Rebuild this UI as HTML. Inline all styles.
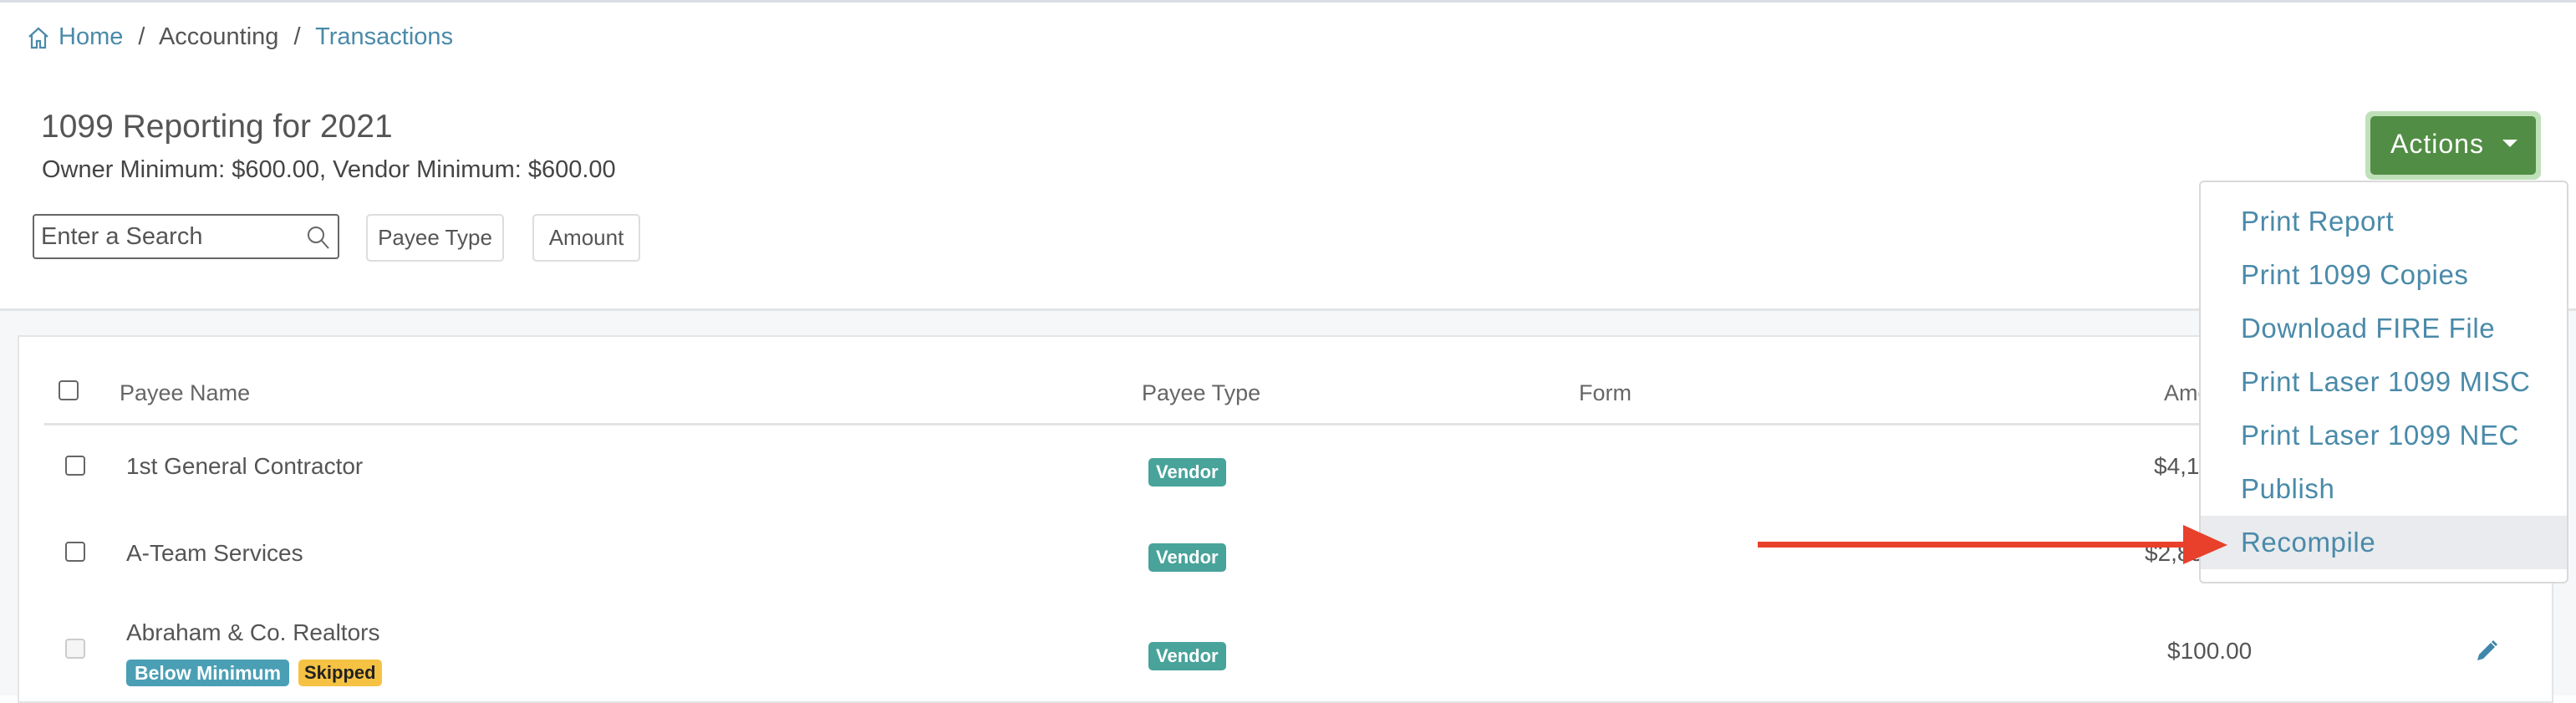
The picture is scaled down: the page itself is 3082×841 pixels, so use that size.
<!DOCTYPE html>
<html><head><meta charset="utf-8">
<style>
*{box-sizing:border-box;margin:0;padding:0}
body{width:3082px;height:832px;overflow:hidden;background:#fff;font-family:"Liberation Sans",sans-serif;color:#555;position:relative}
.a{position:absolute;white-space:nowrap}
.link{color:#4a8aa9}
.cb{position:absolute;width:24px;height:24px;border:2.5px solid #666;border-radius:4px;background:#fff}
.badge{position:absolute;height:34px;border-radius:5px;color:#fff;font-weight:bold;font-size:22px;line-height:34px;padding:0 9px}
.dd{position:absolute;left:2631px;top:216px;width:442px;height:482px;background:#fff;border:2px solid #d9d9d9;border-radius:6px}
.dd div{position:absolute;left:0;width:438px;height:64px;line-height:64px;padding-left:48px;font-size:33px;color:#4a8aa9;letter-spacing:0.6px}
</style></head><body>
<div class="a" style="left:0;top:0;width:3082px;height:3px;background:#d9dde3"></div>
<svg class="a" style="left:33px;top:31px" width="26" height="28" viewBox="0 0 26 28"><path d="M2 13 L13 3 L24 13 M5 11 V26 H11 V18 H15 V26 H21 V11" fill="none" stroke="#4a8aa9" stroke-width="2.2"/></svg>
<div class="a" style="left:70px;top:28px;font-size:29px"><span class="link">Home</span> <span style="color:#555;margin:0 10px">/</span> <span>Accounting</span> <span style="margin:0 10px">/</span> <span class="link">Transactions</span></div>
<div class="a" style="left:49px;top:130px;font-size:39px;color:#555">1099 Reporting for 2021</div>
<div class="a" style="left:50px;top:187px;font-size:29px;color:#444">Owner Minimum: $600.00, Vendor Minimum: $600.00</div>
<div class="a" style="left:39px;top:256px;width:367px;height:54px;border:2.5px solid #666;border-radius:4px;font-size:29px;line-height:50px;padding-left:8px;color:#555">Enter a Search
<svg style="position:absolute;right:8px;top:11px" width="30" height="30" viewBox="0 0 30 30"><circle cx="12" cy="12" r="9" fill="none" stroke="#666" stroke-width="2"/><path d="M19 19 L27 28" stroke="#666" stroke-width="2"/></svg></div>
<div class="a" style="left:438px;top:256px;width:165px;height:57px;border:2px solid #ddd;border-radius:5px;font-size:26px;line-height:53px;text-align:center">Payee Type</div>
<div class="a" style="left:637px;top:256px;width:129px;height:57px;border:2px solid #ddd;border-radius:5px;font-size:26px;line-height:53px;text-align:center">Amount</div>
<div class="a" style="left:0;top:369px;width:3082px;height:463px;background:#f6f7f9;border-top:3px solid #e3e4e6"></div>
<div class="a" style="left:21px;top:401px;width:3034px;height:440px;background:#fff;border:2px solid #e3e4e6"></div>
<div class="a" style="left:53px;top:506px;width:3000px;height:3px;background:#e3e3e3"></div>
<div class="cb" style="left:70px;top:455px"></div>
<div class="a" style="left:143px;top:455px;font-size:27px;color:#666">Payee Name</div>
<div class="a" style="left:1366px;top:455px;font-size:27px;color:#666">Payee Type</div>
<div class="a" style="left:1889px;top:455px;font-size:27px;color:#666">Form</div>
<div class="a" style="left:2589px;top:455px;font-size:27px;color:#666">Amount</div>
<div class="cb" style="left:78px;top:545px"></div>
<div class="a" style="left:151px;top:542px;font-size:28px">1st General Contractor</div>
<div class="badge" style="left:1374px;top:548px;background:#48a39a">Vendor</div>
<div class="a" style="left:2577px;top:542px;font-size:28px">$4,172.00</div>
<div class="cb" style="left:78px;top:648px"></div>
<div class="a" style="left:151px;top:646px;font-size:28px">A-Team Services</div>
<div class="badge" style="left:1374px;top:650px;background:#48a39a">Vendor</div>
<div class="a" style="left:2566px;top:646px;font-size:28px">$2,850.00</div>
<div class="cb" style="left:78px;top:764px;border-color:#ccc;background:#f5f5f5"></div>
<div class="a" style="left:151px;top:741px;font-size:28px">Abraham &amp; Co. Realtors</div>
<div class="badge" style="left:151px;top:789px;height:32px;line-height:32px;background:#4a9fb5;padding:0 10px;font-size:23px">Below Minimum</div>
<div class="badge" style="left:357px;top:789px;height:32px;line-height:32px;background:#f6c244;color:#222;padding:0 7px">Skipped</div>
<div class="badge" style="left:1374px;top:768px;background:#48a39a">Vendor</div>
<div class="a" style="left:2593px;top:763px;font-size:28px">$100.00</div>
<svg class="a" style="left:2960px;top:764px" width="30" height="30" viewBox="0 0 30 30"><path d="M4 26 L6 19 L20 5 L25 10 L11 24 Z" fill="#3f86ad"/><path d="M21 4 L23 2 L28 7 L26 9 Z" fill="#3f86ad"/></svg>
<div class="a" style="left:2830px;top:133px;width:210px;height:82px;border-radius:8px;background:#bfe0b8"></div>
<div class="a" style="left:2836px;top:139px;width:198px;height:70px;border-radius:5px;background:#518d45;color:#fff;font-size:32px;line-height:66px;padding-left:24px;letter-spacing:1px">Actions<span style="position:absolute;left:158px;top:28px;width:0;height:0;border-left:9px solid transparent;border-right:9px solid transparent;border-top:9px solid #fff"></span></div>
<div class="dd">
<div style="top:15px">Print Report</div>
<div style="top:79px">Print 1099 Copies</div>
<div style="top:143px">Download FIRE File</div>
<div style="top:207px">Print Laser 1099 MISC</div>
<div style="top:271px">Print Laser 1099 NEC</div>
<div style="top:335px">Publish</div>
<div style="top:399px;background:#e9ebee">Recompile</div>
</div>
<div class="a" style="left:2103px;top:648px;width:520px;height:7px;background:#e8402b"></div>
<svg class="a" style="left:2612px;top:628px" width="55" height="48"><path d="M0 0 L53 24 L0 47 Z" fill="#e8402b"/></svg>
</body></html>
